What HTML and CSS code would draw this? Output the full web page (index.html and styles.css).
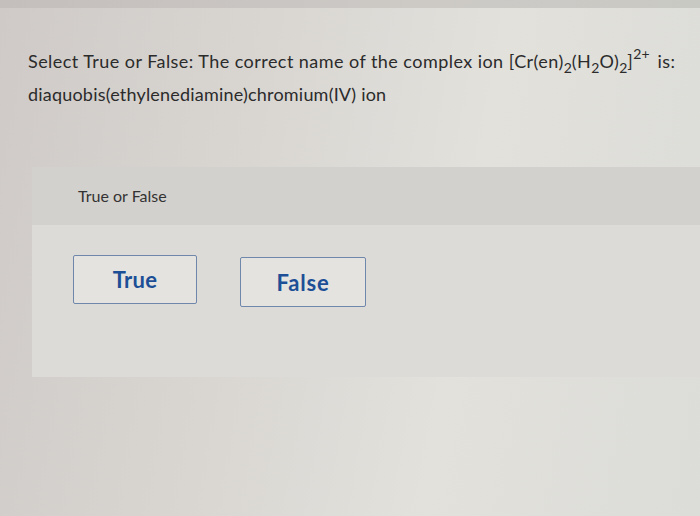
FILE: index.html
```html
<!DOCTYPE html>
<html lang="en">
<head>
<meta charset="utf-8">
<title>True or False</title>
<link rel="stylesheet" href="styles.css">
</head>
<body>
<div class="topbar"></div>
<main class="page">
  <div class="prompt">
    <p class="line">Select True or False: The correct name of the complex ion [Cr(en)<sub>2</sub>(H<sub>2</sub>O)<sub>2</sub>]<sup>2+</sup> is:</p>
    <p class="line">diaquobis(ethylenediamine)chromium(IV) ion</p>
  </div>
  <section class="panel">
    <div class="panel-head">True or False</div>
    <div class="panel-body">
      <button class="choice">True</button>
      <button class="choice choice-false">False</button>
    </div>
  </section>
</main>
</body>
</html>
```
FILE: styles.css
```css
html, body {
  margin: 0;
  height: 100%;
}
body {
  background: linear-gradient(100deg, #cfcac7 0%, #d9d6d2 35%, #e2e1dc 65%, #dcdcd8 100%);
  font-family: "Lato", "Liberation Sans", sans-serif;
  color: #2b2b2b;
  overflow: hidden;
}
.topbar {
  height: 8px;
  background: linear-gradient(90deg, #c4bebd, #cdcac6 60%, #c9c9c4);
}
.page {
  padding: 37px 0 0 28px;
}
.prompt .line {
  margin: 0;
  font-size: 18px;
  line-height: 33px;
  letter-spacing: 0.2px;
}
.prompt .line:first-child {
  letter-spacing: 0.45px;
}
.prompt sub,
.prompt sup {
  font-size: 14px;
  line-height: 0;
  letter-spacing: 0;
}
.prompt sub { vertical-align: -5px; }
.prompt sup { vertical-align: 9px; margin-right: 3px; }
.panel {
  margin: 56px 0 0 4px;
  background: #dddbd7;
  height: 210px;
}
.panel-head {
  height: 58px;
  box-sizing: border-box;
  padding: 19px 0 0 46px;
  background: #d3d1cd;
  font-size: 16px;
  color: #333;
}
.panel-body {
  display: flex;
  gap: 43px;
  padding: 30px 0 0 41px;
}
.choice {
  width: 124px;
  height: 49px;
  background: #e4e3df;
  border: 1.5px solid #6f87aa;
  border-radius: 2px;
  font-family: inherit;
  font-size: 22px;
  font-weight: 700;
  letter-spacing: 0.3px;
  color: #1d4f96;
  padding: 0;
}
.choice-false {
  margin-top: 2px;
  width: 126px;
  height: 50px;
  letter-spacing: 0.8px;
}
```
